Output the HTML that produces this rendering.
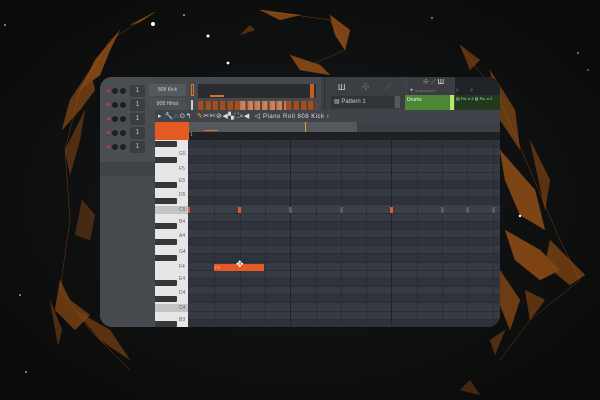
<!DOCTYPE html>
<html><head><meta charset="utf-8"><style>
*{margin:0;padding:0;box-sizing:border-box}
body{width:600px;height:400px;overflow:hidden;background:#0e0f0f;font-family:"Liberation Sans",sans-serif;position:relative}
.a{position:absolute}
.win{left:100px;top:77px;width:400px;height:250px;border-radius:12px;overflow:hidden;background:#46494e}
.t{font-size:5px;color:#ccc;white-space:nowrap}
.row{position:absolute;left:0;width:312px;height:8.17px;border-bottom:1px solid #2a2e35}
.wr{background:#353a43}.br{background:#2e323a}
.bk{position:absolute;left:0;width:22px;height:6px;background:#35373b;border-radius:0 1px 1px 0}
.lbl{position:absolute;left:24px;font-size:5px;color:#666}
.vl{position:absolute;top:0;width:1px;height:186px;background:#2a2d33}
.ch{position:absolute;left:0;width:53px;height:13px}
.knob{position:absolute;width:6px;height:6px;border-radius:50%;background:#1e1f22;top:4px}
</style></head><body>
<svg class="a" style="left:0;top:0" width="600" height="400">
<defs><radialGradient id="g" cx="50%" cy="50%" r="60%"><stop offset="0" stop-color="#15171c"/><stop offset="1" stop-color="#0b0c0a"/></radialGradient></defs>
<rect width="600" height="400" fill="url(#g)"/>
<g fill="#d9701a" opacity="0.55" stroke="#c86414" stroke-width="0.4">
<polygon points="155,12 130,25 140,22"/>
<polygon points="120,30 95,60 80,90 100,75 110,50"/>
<polygon points="90,70 70,100 62,130 80,110 95,90" opacity="0.8"/>
<polygon points="85,110 65,150 70,175 80,140" opacity="0.6"/>
<polygon points="82,200 75,235 90,240 95,215" opacity="0.5"/>
<polygon points="60,280 55,310 75,330 90,315 70,300" opacity="0.8"/>
<polygon points="75,310 100,340 130,360 110,330" opacity="0.7"/>
<polygon points="50,300 62,330 58,345" opacity="0.6"/>
<polygon points="260,10 300,15 280,20"/>
<polygon points="330,15 350,30 345,50 335,35"/>
<polygon points="290,55 320,65 330,75 300,70"/>
<polygon points="250,25 240,35 255,30" opacity="0.6"/>
<polygon points="460,45 470,70 480,60" opacity="0.7"/>
<polygon points="490,70 515,110 520,150 500,120" opacity="0.8"/>
<polygon points="500,150 535,190 545,230 520,215 505,180"/>
<polygon points="530,140 550,180 545,210" opacity="0.7"/>
<polygon points="505,230 540,250 560,270 540,280 515,260"/>
<polygon points="550,240 585,275 570,285 545,265" opacity="0.8"/>
<polygon points="500,270 520,300 510,330 498,300" opacity="0.85"/>
<polygon points="525,290 545,300 530,320" opacity="0.7"/>
<polygon points="505,330 495,355 490,340" opacity="0.6"/>
<polygon points="470,380 480,395 460,390" opacity="0.5"/>
</g>
<g stroke="#b85a12" stroke-width="0.5" fill="none" opacity="0.6">
<polyline points="155,12 110,40 80,90 65,150 70,220 60,290 90,330 130,370"/>
<polyline points="460,45 500,100 530,170 560,240 580,280 530,320 500,360"/>
<polyline points="260,10 330,20 345,50 300,70"/>
</g>
<g fill="#fff"><circle cx="153" cy="24" r="2"/><circle cx="208" cy="36" r="1.5"/><circle cx="228" cy="63" r="1.4"/><circle cx="184" cy="15" r="0.8"/><circle cx="5" cy="25" r="0.8"/><circle cx="520" cy="216" r="1.2"/><circle cx="20" cy="295" r="0.8"/><circle cx="26" cy="372" r="0.8"/><circle cx="578" cy="53" r="0.7"/><circle cx="432" cy="18" r="0.7"/><circle cx="588" cy="70" r="0.6"/></g>
</svg>

<div class="a win">
 <div class="a" style="left:0;top:0;width:55px;height:90px;background:#4a4d52"></div>
 <div class="a" style="left:0;top:85px;width:55px;height:14px;background:#3f4247"></div>
 <div class="a" style="left:0;top:99px;width:55px;height:151px;background:#46494e"></div>
 <div class="ch" style="top:7px"><div class="a" style="left:7px;top:5px;width:3px;height:3px;border-radius:50%;background:#d33"></div><div class="knob" style="left:12px"></div><div class="knob" style="left:20px"></div><div class="a" style="left:30px;top:1px;width:15px;height:12px;background:#3a3d41;border-radius:2px;color:#bbb;font-size:7px;text-align:center;line-height:12px">1</div></div>
 <div class="ch" style="top:21px"><div class="a" style="left:7px;top:5px;width:3px;height:3px;border-radius:50%;background:#d33"></div><div class="knob" style="left:12px"></div><div class="knob" style="left:20px"></div><div class="a" style="left:30px;top:1px;width:15px;height:12px;background:#3a3d41;border-radius:2px;color:#bbb;font-size:7px;text-align:center;line-height:12px">1</div></div>
 <div class="ch" style="top:35px"><div class="a" style="left:7px;top:5px;width:3px;height:3px;border-radius:50%;background:#d33"></div><div class="knob" style="left:12px"></div><div class="knob" style="left:20px"></div><div class="a" style="left:30px;top:1px;width:15px;height:12px;background:#3a3d41;border-radius:2px;color:#bbb;font-size:7px;text-align:center;line-height:12px">1</div></div>
 <div class="ch" style="top:49px"><div class="a" style="left:7px;top:5px;width:3px;height:3px;border-radius:50%;background:#d33"></div><div class="knob" style="left:12px"></div><div class="knob" style="left:20px"></div><div class="a" style="left:30px;top:1px;width:15px;height:12px;background:#3a3d41;border-radius:2px;color:#bbb;font-size:7px;text-align:center;line-height:12px">1</div></div>
 <div class="ch" style="top:63px"><div class="a" style="left:7px;top:5px;width:3px;height:3px;border-radius:50%;background:#d33"></div><div class="knob" style="left:12px"></div><div class="knob" style="left:20px"></div><div class="a" style="left:30px;top:1px;width:15px;height:12px;background:#3a3d41;border-radius:2px;color:#bbb;font-size:7px;text-align:center;line-height:12px">1</div></div>
 <div class="a t" style="left:49px;top:7px;width:37px;height:12px;background:#55585d;border-radius:2px;text-align:center;line-height:12px">808 Kick</div>
 <div class="a t" style="left:49px;top:21px;width:37px;height:12px;background:#4c4f54;border-radius:2px;text-align:center;line-height:12px">808 Hihat</div>
 <div class="a" style="left:91px;top:7px;width:3px;height:12px;border:1px solid #d5782a"></div>
 <div class="a" style="left:98px;top:7px;width:118px;height:14px;background:#2a2c30"></div>
 <div class="a" style="left:110px;top:18px;width:14px;height:2px;background:#e0692a"></div>
 <div class="a" style="left:210px;top:7px;width:4px;height:14px;background:#c95c20"></div>
 <div class="a" style="left:91px;top:23px;width:2px;height:10px;background:#ccc"></div>
 <div class="a" style="left:98px;top:24px;width:118px;height:9px;background:repeating-linear-gradient(90deg,#a34c1d 0 5.5px,#3b3e43 5.5px 7.35px)"></div>
 <div class="a" style="left:140px;top:24px;width:46px;height:9px;background:repeating-linear-gradient(90deg,#e39a6c 0 5.5px,#3b3e43 5.5px 7.35px);opacity:.7"></div>
 <div class="a" style="left:221px;top:0;width:85px;height:35px;background:#3b3e43"></div>
 <div class="a" style="left:224px;top:0;width:1px;height:35px;background:#2c2e32"></div>
 <div class="a" style="left:238px;top:6px;color:#ddd;font-size:8px">Ш</div>
 <div class="a" style="left:262px;top:5px;color:#666;font-size:9px">✣</div>
 <div class="a" style="left:285px;top:5px;color:#666;font-size:9px">⟋</div>
 <div class="a t" style="left:231px;top:19px;width:63px;height:12px;background:#303338;line-height:12px;padding-left:3px;font-size:6px;color:#ccc">▤ Pattern 1</div>
 <div class="a" style="left:295px;top:19px;width:5px;height:12px;background:#54575c"></div>
 <div class="a" style="left:307px;top:0;width:48px;height:18px;background:#3a3d42"></div>
 <div class="a" style="left:323px;top:1px;color:#888;font-size:7px">✣ ⟋ <span style="color:#eee">Ш</span></div>
 <div class="a" style="left:310px;top:11px;color:#eee;font-size:6px">+ <span style="color:#888;font-size:3px">NOTE SAN PIT</span></div>
 <div class="a" style="left:355px;top:0;width:45px;height:18px;background:#1f2226"></div>
 <div class="a" style="left:356px;top:10px;color:#aaa;font-size:4px">1 &nbsp;&nbsp;&nbsp;&nbsp;&nbsp;&nbsp;&nbsp;&nbsp;&nbsp; 2</div>
 <div class="a t" style="left:305px;top:18px;width:45px;height:16px;background:#4d8736;color:#dfe;font-size:5px;padding:2px">Drums</div>
 <div class="a" style="left:350px;top:18px;width:4px;height:16px;background:#b4ea6a"></div>
 <div class="a" style="left:355px;top:18px;width:45px;height:16px;background:#1f3a1d"></div>
 <div class="a t" style="left:356px;top:19px;font-size:4px;color:#cdd">▤ Pa..n 2 ▤ Pa..n 2</div>
 <div class="a" style="left:55px;top:33px;width:345px;height:217px;background:#3c3f45"></div>
 <div class="a" style="left:55px;top:33px;width:345px;height:12px;background:#404348"></div>
 <div class="a" style="left:58px;top:35px;color:#ddd;font-size:7px;white-space:nowrap;letter-spacing:.5px">▸ <span>🔧</span><span style="color:#3ca">∩</span>⊙↰ &nbsp;<span style="color:#e8a040">✎</span>✂✄⊘◀▚⛶⌕◀ &nbsp;◁ <span style="font-size:6px">Piano Roll 808 Kick ›</span></div>
 <div class="a" style="left:55px;top:45px;width:34px;height:18px;background:#e35a23"></div>
 <div class="a" style="left:89px;top:45px;width:168px;height:10px;background:#55585d"></div>
 <div class="a" style="left:104px;top:53px;width:14px;height:1px;background:#e07030"></div>
 <div class="a" style="left:205px;top:45px;width:1px;height:10px;background:#e0a040"></div>
 <div class="a" style="left:89px;top:55px;width:311px;height:8px;background:#1e2024"></div>
 <div class="a" style="left:90px;top:55px;color:#aaa;font-size:5px">1</div>
 <div class="a" style="left:55px;top:63px;width:33px;height:187px;background:#e6e6e6">
  <div class="bk" style="top:1px"></div><div class="bk" style="top:17px"></div><div class="bk" style="top:42px"></div><div class="bk" style="top:58px"></div>
  <div class="a" style="left:0;top:66px;width:33px;height:8px;background:#c4c4c4"></div>
  <div class="bk" style="top:83px"></div><div class="bk" style="top:99px"></div><div class="bk" style="top:115px"></div><div class="bk" style="top:140px"></div><div class="bk" style="top:156px"></div>
  <div class="a" style="left:0;top:164px;width:33px;height:8px;background:#c4c4c4"></div>
  <div class="bk" style="top:181px"></div>
  <div class="lbl" style="top:11px">G5</div><div class="lbl" style="top:26px">F5</div><div class="lbl" style="top:38px">E5</div><div class="lbl" style="top:52px">D5</div><div class="lbl" style="top:67px">C5</div><div class="lbl" style="top:79px">B4</div><div class="lbl" style="top:93px">A4</div><div class="lbl" style="top:109px">G4</div><div class="lbl" style="top:124px">F4</div><div class="lbl" style="top:136px">E4</div><div class="lbl" style="top:150px">D4</div><div class="lbl" style="top:165px">C4</div><div class="lbl" style="top:177px">B3</div>
 </div>
 <div class="a" style="left:88px;top:63px;width:312px;height:187px;overflow:hidden">
  <div class="row br" style="top:0"></div><div class="row wr" style="top:8.17px"></div><div class="row br" style="top:16.34px"></div><div class="row wr" style="top:24.51px"></div><div class="row wr" style="top:32.68px"></div><div class="row br" style="top:40.85px"></div><div class="row wr" style="top:49.02px"></div><div class="row br" style="top:57.19px"></div><div class="row wr" style="top:65.36px;background:#3a3f48"></div><div class="row wr" style="top:73.53px"></div><div class="row br" style="top:81.7px"></div><div class="row wr" style="top:89.87px"></div><div class="row br" style="top:98.04px"></div><div class="row wr" style="top:106.21px"></div><div class="row br" style="top:114.38px"></div><div class="row wr" style="top:122.55px"></div><div class="row wr" style="top:130.72px"></div><div class="row br" style="top:138.89px"></div><div class="row wr" style="top:147.06px"></div><div class="row br" style="top:155.23px"></div><div class="row wr" style="top:163.4px"></div><div class="row wr" style="top:171.57px"></div><div class="row br" style="top:179.74px"></div>
  <div class="vl" style="left:26px"></div><div class="vl" style="left:52px"></div><div class="vl" style="left:77px"></div><div class="vl" style="left:102px;background:#1f2226"></div><div class="vl" style="left:128px"></div><div class="vl" style="left:153px"></div><div class="vl" style="left:178px"></div><div class="vl" style="left:203px;background:#1f2226"></div><div class="vl" style="left:229px"></div><div class="vl" style="left:254px"></div><div class="vl" style="left:279px"></div><div class="vl" style="left:305px"></div>
  <div class="a" style="left:0;top:67px;width:2px;height:6px;background:#e35a23"></div>
  <div class="a" style="left:50px;top:67px;width:3px;height:6px;background:#e35a23"></div>
  <div class="a" style="left:101px;top:67px;width:3px;height:6px;background:#5a5d63"></div>
  <div class="a" style="left:152px;top:67px;width:3px;height:6px;background:#5a5d63"></div>
  <div class="a" style="left:202px;top:67px;width:3px;height:6px;background:#e35a23"></div>
  <div class="a" style="left:253px;top:67px;width:3px;height:6px;background:#5a5d63"></div>
  <div class="a" style="left:278px;top:67px;width:3px;height:6px;background:#5a5d63"></div>
  <div class="a" style="left:304px;top:67px;width:3px;height:6px;background:#5a5d63"></div>
  <div class="a" style="left:26px;top:124px;width:50px;height:7px;background:#e35a23;font-size:4px;color:#fcc;padding-left:1px;line-height:7px">F4</div>
  <div class="a" style="left:48px;top:120px;color:#fff;font-size:9px;line-height:9px">✥</div>
 </div>
</div>
</body></html>
